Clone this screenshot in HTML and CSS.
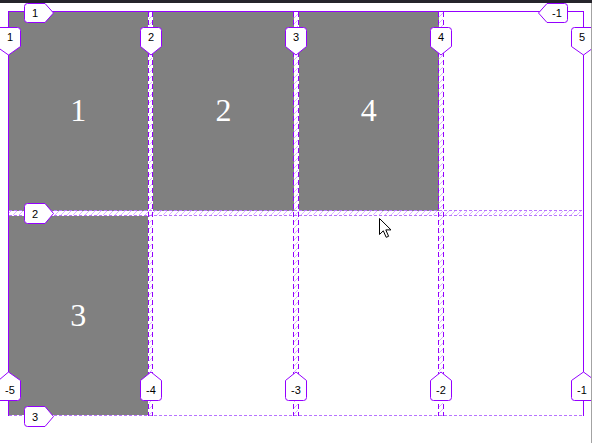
FILE: index.html
```html
<!DOCTYPE html>
<html>
<head>
<meta charset="utf-8">
<title>Grid</title>
<link rel="stylesheet" href="styles.css">
</head>
<body>
<div class="topbar"></div>
<main class="viewport">
  <div class="grid">
    <div class="item a">1</div>
    <div class="item b">2</div>
    <div class="item c">3</div>
    <div class="item d">4</div>
  </div>
</main>
<svg class="overlay" width="592" height="443" viewBox="0 0 592 443">
  <defs>
    <pattern id="hatch" width="6" height="6" patternUnits="userSpaceOnUse">
      <path d="M0,6 L6,0" stroke="#d9b2ff" stroke-width="1"/>
    </pattern>
  </defs>
  <g fill="url(#hatch)">
    <rect x="8" y="211" width="576" height="4"/>
    <rect x="149" y="11" width="3" height="405"/>
    <rect x="294" y="11" width="4" height="405"/>
    <rect x="439" y="11" width="4" height="405"/>
  </g>
  <g fill="none" stroke="#b873ff" stroke-dasharray="3 2">
    <path d="M9,210.5 H583 M9,215.5 H583 M9,415.5 H583"/>
  </g>
  <g fill="none" stroke="#9400ff">
    <path d="M8,11.5 H584 M8.5,11 V416 M583.5,11 V416"/>
    <path stroke-dasharray="5 3" d="M148.5,12 V416 M152.5,12 V416 M293.5,12 V416 M298.5,12 V416 M438.5,12 V416 M443.5,12 V416"/>
  </g>
  <g class="labels" fill="#fff" stroke="#9400ff">
    <path d="M27.5,3.5 H45 L53.5,13 L45,22.5 H27.5 Q24.5,22.5 24.5,19.5 V6.5 Q24.5,3.5 27.5,3.5 Z"/>
    <path d="M27.5,203.5 H45 L53.5,213.5 L45,223.5 H27.5 Q24.5,223.5 24.5,220.5 V206.5 Q24.5,203.5 27.5,203.5 Z"/>
    <path d="M27.5,406.5 H45 L53.5,416.5 L45,426.5 H27.5 Q24.5,426.5 24.5,423.5 V409.5 Q24.5,406.5 27.5,406.5 Z"/>
    <path d="M564.5,3.5 H547 L538.5,13 L547,22.5 H564.5 Q567.5,22.5 567.5,19.5 V6.5 Q567.5,3.5 564.5,3.5 Z"/>

    <path d="M-1.5,27.5 H17.5 Q20.5,27.5 20.5,30.5 V46.5 L8.5,55 L-1.5,48 Z"/>
    <path d="M140.5,30.5 Q140.5,27.5 143.5,27.5 H158.5 Q161.5,27.5 161.5,30.5 V46.5 L151,55 L140.5,46.5 Z"/>
    <path d="M285.5,30.5 Q285.5,27.5 288.5,27.5 H303.5 Q306.5,27.5 306.5,30.5 V46.5 L296,55 L285.5,46.5 Z"/>
    <path d="M430.5,30.5 Q430.5,27.5 433.5,27.5 H448.5 Q451.5,27.5 451.5,30.5 V46.5 L441,55 L430.5,46.5 Z"/>
    <path d="M571.5,30.5 Q571.5,27.5 574.5,27.5 H593 V48 L583.5,55 L571.5,46.5 Z"/>

    <path d="M-1.5,380.5 L8.5,372 L20.5,380.5 V397.5 Q20.5,400.5 17.5,400.5 H-1.5 Z"/>
    <path d="M140.5,380.5 L151,372 L161.5,380.5 V397.5 Q161.5,400.5 158.5,400.5 H143.5 Q140.5,400.5 140.5,397.5 Z"/>
    <path d="M285.5,380.5 L296,372 L306.5,380.5 V397.5 Q306.5,400.5 303.5,400.5 H288.5 Q285.5,400.5 285.5,397.5 Z"/>
    <path d="M430.5,380.5 L441,372 L451.5,380.5 V397.5 Q451.5,400.5 448.5,400.5 H433.5 Q430.5,400.5 430.5,397.5 Z"/>
    <path d="M571.5,380.5 L583.5,372 L593,379 V400.5 H574.5 Q571.5,400.5 571.5,397.5 Z"/>
  </g>
  <g class="nums">
    <text x="35" y="17">1</text>
    <text x="35" y="217.5">2</text>
    <text x="35" y="420.5">3</text>
    <text x="557" y="17">-1</text>
    <text x="10" y="41">1</text>
    <text x="151" y="41">2</text>
    <text x="296" y="41">3</text>
    <text x="441" y="41">4</text>
    <text x="582" y="41">5</text>
    <text x="10" y="394">-5</text>
    <text x="151" y="394">-4</text>
    <text x="296" y="394">-3</text>
    <text x="441" y="394">-2</text>
    <text x="582" y="394">-1</text>
  </g>
  <path class="cursor" d="M379.5,218.5 V234.5 L383.3,230.8 L386.2,237.3 L388.6,236.3 L385.8,229.9 L391,229.9 Z"/>
  <rect class="edge" x="591" y="3" width="1" height="440"/>
</svg>
</body>
</html>
```

FILE: styles.css
```css
html, body {
  margin: 0;
  padding: 0;
  width: 592px;
  height: 443px;
  overflow: hidden;
  background: #ffffff;
}

body {
  position: relative;
}

.topbar {
  height: 3px;
  background: #26252b;
}

.viewport {
  padding: 8px;
}

.grid {
  display: grid;
  grid-template-columns: repeat(4, 1fr);
  grid-template-rows: repeat(2, 1fr);
  gap: 5px;
  width: 576px;
  height: 404px;
}

.item {
  background: #808080;
  color: #ffffff;
  font-family: "Liberation Serif", "Times New Roman", serif;
  font-size: 32px;
  display: flex;
  align-items: center;
  justify-content: center;
}

.a { grid-column: 1; grid-row: 1; }
.b { grid-column: 2; grid-row: 1; }
.c { grid-column: 1; grid-row: 2; }
.d { grid-column: 3; grid-row: 1; }

.overlay {
  position: absolute;
  left: 0;
  top: 0;
  pointer-events: none;
}

.nums text {
  font-family: "Liberation Sans", Arial, sans-serif;
  font-size: 11px;
  fill: #000000;
  text-anchor: middle;
}

.cursor {
  fill: #ffffff;
  stroke: #000000;
  stroke-width: 1;
  stroke-linejoin: miter;
}

.edge {
  fill: #a3a3a3;
}
```
